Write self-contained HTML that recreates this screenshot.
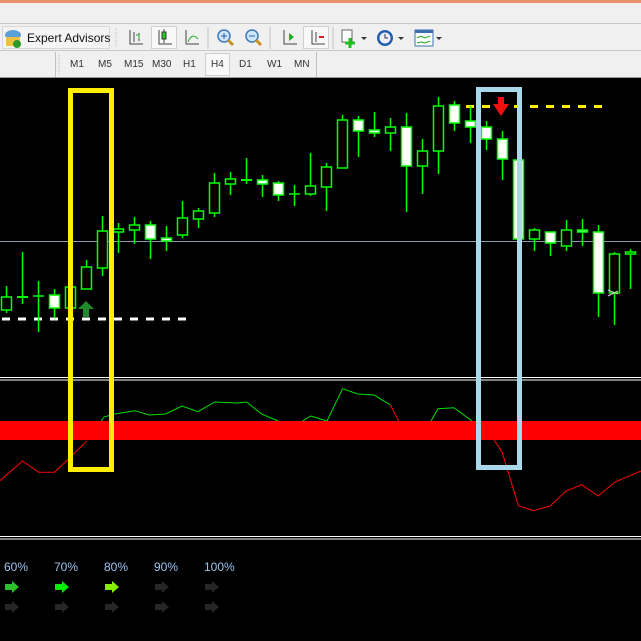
<!DOCTYPE html>
<html><head><meta charset="utf-8"><style>
*{margin:0;padding:0;box-sizing:border-box}
body{width:641px;height:641px;overflow:hidden;background:#000;font-family:"Liberation Sans",sans-serif;position:relative}
#tb{position:absolute;left:0;top:0;width:641px;height:78px;background:#f0f0f0}
.t{position:absolute;font-size:10px;color:#333;top:59px}
.p{position:absolute;font-size:12px;color:#9cc3ee;top:560px}
</style></head><body>
<div id="tb">
<div style="position:absolute;left:0;top:0;width:641px;height:3px;background:#e8916d"></div>
<div style="position:absolute;left:0;top:23px;width:641px;height:1px;background:#c8c8c8"></div>
<div style="position:absolute;left:0;top:50px;width:641px;height:1px;background:#c8c8c8"></div>
<div style="position:absolute;left:0;top:77px;width:641px;height:1px;background:#999"></div>
<div style="position:absolute;left:2px;top:26px;width:108px;height:23px;border:1px solid #d8d8d8;background:#f4f4f4"></div>
<div style="position:absolute;left:27px;top:31px;font-size:12px;color:#111">Expert Advisors</div>
<div style="position:absolute;left:55px;top:52px;width:1px;height:25px;background:#c0c0c0"></div>
<div style="position:absolute;left:316px;top:52px;width:1px;height:25px;background:#c0c0c0"></div>
<div style="position:absolute;left:205px;top:53px;width:25px;height:23px;border:1px solid #d0d0d0;background:#f8f8f8"></div>
<div style="position:absolute;left:151px;top:26px;width:26px;height:23px;border:1px solid #d0d0d0;background:#f8f8f8"></div>
<div style="position:absolute;left:303px;top:26px;width:26px;height:23px;border:1px solid #d0d0d0;background:#f8f8f8"></div>
<span class="t" style="left:70px">M1</span><span class="t" style="left:98px">M5</span><span class="t" style="left:124px">M15</span><span class="t" style="left:152px">M30</span><span class="t" style="left:183px">H1</span><span class="t" style="left:211px">H4</span><span class="t" style="left:239px">D1</span><span class="t" style="left:267px">W1</span><span class="t" style="left:294px">MN</span>
<svg width="641" height="78" style="position:absolute;left:0;top:0">
<g fill="none">
<ellipse cx="13" cy="35" rx="8" ry="5" fill="#5aa0d8"/><rect x="6" y="37" width="14" height="9" fill="#f0c040"/><circle cx="17" cy="44" r="4" fill="#2a9a2a"/>
<line x1="116" y1="28" x2="116" y2="48" stroke="#bbb" stroke-dasharray="1 1"/>
<line x1="208" y1="27" x2="208" y2="49" stroke="#c0c0c0"/><line x1="270" y1="27" x2="270" y2="49" stroke="#c0c0c0"/><line x1="333" y1="27" x2="333" y2="49" stroke="#c0c0c0"/>
<path d="M130 30v14h13M134 32v10M139 33v8" stroke="#444"/><path d="M136 35h3v4" stroke="#2a2"/>
<path d="M159 30v14h13M164 29v14" stroke="#444"/><rect x="162" y="32" width="4" height="7" fill="#2c2" stroke="#333"/>
<path d="M186 30v14h13" stroke="#444"/><path d="M188 42q4-10 10-3" stroke="#2a2"/>
<circle cx="224" cy="36" r="6" fill="#cfe6fb" stroke="#3a78c0" stroke-width="1.5"/><path d="M221 36h6M224 33v6" stroke="#2060b0"/><path d="M228 40l5 5" stroke="#c89020" stroke-width="3"/>
<circle cx="252" cy="36" r="6" fill="#cfe6fb" stroke="#3a78c0" stroke-width="1.5"/><path d="M249 36h6" stroke="#2060b0"/><path d="M256 40l5 5" stroke="#c89020" stroke-width="3"/>
<path d="M284 30v14h13" stroke="#444"/><path d="M289 33l5 4-5 4z" fill="#2a2"/>
<path d="M312 30v14h13M316 32v10" stroke="#444"/><path d="M319 37h5" stroke="#c22" stroke-width="2"/>
<rect x="342" y="30" width="10" height="12" fill="#fff" stroke="#666"/><path d="M350 38v10M345 43h10" stroke="#2b2" stroke-width="3"/><path d="M361 37l3 3 3-3z" fill="#333"/>
<circle cx="385" cy="38" r="8" fill="#1f5fb0"/><circle cx="385" cy="38" r="5.5" fill="#eef"/><path d="M385 34v4h3" stroke="#333"/><path d="M398 37l3 3 3-3z" fill="#333"/>
<rect x="415" y="30" width="18" height="16" fill="#fff" stroke="#3a70b0"/><rect x="415" y="30" width="18" height="3" fill="#3a70b0"/><path d="M417 38l4-2 4 2 5-2M417 43l4-1 4 1 5-2" stroke="#2a2"/><path d="M436 37l3 3 3-3z" fill="#333"/>
<line x1="59" y1="55" x2="59" y2="74" stroke="#bbb" stroke-dasharray="1 1"/>
</g></svg>
</div>
<svg width="641" height="641" style="position:absolute;left:0;top:0">
<rect x="0" y="78" width="641" height="1" fill="#000"/>
<line x1="0" y1="241.5" x2="641" y2="241.5" stroke="#8a9aa8"/>
<line x1="2" y1="319" x2="190" y2="319" stroke="#fff" stroke-width="3" stroke-dasharray="8 8"/>
<line x1="450" y1="106.5" x2="605" y2="106.5" stroke="#ffea00" stroke-width="3" stroke-dasharray="8 8"/>
<rect x="450" y="105" width="8" height="3" fill="#e02020"/>
<g stroke="#00ff00" stroke-width="1.5">
<line x1="6.5" y1="286" x2="6.5" y2="313"/><rect x="1.5" y="297" width="10" height="13" fill="#000"/>
<line x1="22.5" y1="252" x2="22.5" y2="304"/><line x1="17" y1="297" x2="28" y2="297" stroke-width="2"/>
<line x1="38.5" y1="281" x2="38.5" y2="332"/><line x1="33" y1="296" x2="44" y2="296"/>
<line x1="54.5" y1="289" x2="54.5" y2="318"/><rect x="49.5" y="295" width="10" height="13" fill="#fff"/>
<line x1="70.5" y1="285" x2="70.5" y2="310"/><rect x="65.5" y="287" width="10" height="21" fill="#000"/>
<line x1="86.5" y1="260" x2="86.5" y2="289"/><rect x="81.5" y="267" width="10" height="22" fill="#000"/>
<line x1="102.5" y1="216" x2="102.5" y2="276"/><rect x="97.5" y="231" width="10" height="37" fill="#000"/>
<line x1="118.5" y1="223" x2="118.5" y2="253"/><rect x="113.5" y="229" width="10" height="3" fill="#000"/>
<line x1="134.5" y1="217" x2="134.5" y2="244"/><rect x="129.5" y="225" width="10" height="5" fill="#000"/>
<line x1="150.5" y1="221" x2="150.5" y2="259"/><rect x="145.5" y="225" width="10" height="14" fill="#fff"/>
<line x1="166.5" y1="226" x2="166.5" y2="251"/><rect x="161.5" y="238" width="10" height="3" fill="#fff"/>
<line x1="182.5" y1="201" x2="182.5" y2="238"/><rect x="177.5" y="218" width="10" height="17" fill="#000"/>
<line x1="198.5" y1="208" x2="198.5" y2="228"/><rect x="193.5" y="211" width="10" height="8" fill="#000"/>
<line x1="214.5" y1="173" x2="214.5" y2="217"/><rect x="209.5" y="183" width="10" height="30" fill="#000"/>
<line x1="230.5" y1="172" x2="230.5" y2="195"/><rect x="225.5" y="179" width="10" height="5" fill="#000"/>
<line x1="246.5" y1="158" x2="246.5" y2="184"/><line x1="241" y1="180" x2="252" y2="180" stroke-width="2"/>
<line x1="262.5" y1="175" x2="262.5" y2="197"/><rect x="257.5" y="180" width="10" height="4" fill="#fff"/>
<line x1="278.5" y1="181" x2="278.5" y2="201"/><rect x="273.5" y="183" width="10" height="12" fill="#fff"/>
<line x1="294.5" y1="185" x2="294.5" y2="206"/><line x1="289" y1="194" x2="300" y2="194"/>
<line x1="310.5" y1="153" x2="310.5" y2="196"/><rect x="305.5" y="186" width="10" height="8" fill="#000"/>
<line x1="326.5" y1="163" x2="326.5" y2="211"/><rect x="321.5" y="167" width="10" height="20" fill="#000"/>
<line x1="342.5" y1="115" x2="342.5" y2="168"/><rect x="337.5" y="120" width="10" height="48" fill="#000"/>
<line x1="358.5" y1="116" x2="358.5" y2="157"/><rect x="353.5" y="120" width="10" height="11" fill="#fff"/>
<line x1="374.5" y1="112" x2="374.5" y2="137"/><rect x="369.5" y="130" width="10" height="3" fill="#fff"/>
<line x1="390.5" y1="118" x2="390.5" y2="151"/><rect x="385.5" y="127" width="10" height="6" fill="#000"/>
<line x1="406.5" y1="113" x2="406.5" y2="212"/><rect x="401.5" y="127" width="10" height="39" fill="#fff"/>
<line x1="422.5" y1="139" x2="422.5" y2="194"/><rect x="417.5" y="151" width="10" height="15" fill="#000"/>
<line x1="438.5" y1="97" x2="438.5" y2="174"/><rect x="433.5" y="106" width="10" height="45" fill="#000"/>
<line x1="454.5" y1="101" x2="454.5" y2="131"/><rect x="449.5" y="105" width="10" height="18" fill="#fff"/>
<line x1="470.5" y1="106" x2="470.5" y2="143"/><rect x="465.5" y="121" width="10" height="6" fill="#fff"/>
<line x1="486.5" y1="121" x2="486.5" y2="150"/><rect x="481.5" y="127" width="10" height="12" fill="#fff"/>
<line x1="502.5" y1="131" x2="502.5" y2="180"/><rect x="497.5" y="139" width="10" height="20" fill="#fff"/>
<rect x="513.5" y="160" width="10" height="79" fill="#fff"/>
<line x1="534.5" y1="228" x2="534.5" y2="251"/><rect x="529.5" y="230" width="10" height="9" fill="#000"/>
<line x1="550.5" y1="232" x2="550.5" y2="256"/><rect x="545.5" y="232" width="10" height="11" fill="#fff"/>
<line x1="566.5" y1="220" x2="566.5" y2="251"/><rect x="561.5" y="230" width="10" height="16" fill="#000"/>
<line x1="582.5" y1="219" x2="582.5" y2="246"/><rect x="577.5" y="230" width="10" height="2" fill="#fff"/>
<line x1="598.5" y1="225" x2="598.5" y2="317"/><rect x="593.5" y="232" width="10" height="61" fill="#fff"/>
<line x1="614.5" y1="252" x2="614.5" y2="325"/><rect x="609.5" y="254" width="10" height="39" fill="#000"/>
<line x1="630.5" y1="249" x2="630.5" y2="289"/><rect x="625.5" y="252" width="10" height="2" fill="#000"/>
</g>
<path d="M608 290l10 4M608 296l10-5" stroke="#ccc"/>
<path d="M83 317v-8h-5l8-8 8 8h-5v8z" fill="#1f8a2a"/>
<path d="M498 97h6v7h5l-8 12-8-12h5z" fill="#f01010"/>
<line x1="0" y1="377.5" x2="641" y2="377.5" stroke="#fff"/><line x1="0" y1="380" x2="641" y2="380" stroke="#fff"/>
<line x1="0" y1="536.5" x2="641" y2="536.5" stroke="#fff"/><line x1="0" y1="539" x2="641" y2="539" stroke="#fff"/>
<polyline fill="none" stroke="#00e000" points="101,421 104,417 114.5,414 135,410.7 149,415 165.6,414 182,406 198,411.7 214.6,402 237,403 246.5,402 261.6,414 278,421"/>
<polyline fill="none" stroke="#00e000" points="302.5,421 310.7,416 327,421 342.6,388.7 357.7,394 374,395 390.4,405"/>
<polyline fill="none" stroke="#00e000" points="431,421 438,408.7 453.8,407.7 472,421"/>
<polyline fill="none" stroke="#f00" points="0,480.7 22.5,461 38.8,472.3 54.4,472.3 67.5,460 87,440.7"/>
<polyline fill="none" stroke="#f00" points="390.4,405 398.6,421"/>
<polyline fill="none" stroke="#f00" points="494,440 502,452 518.4,505.7 533.5,510.7 550,506 566,491 581.8,484.7 598,496 615,482 641,471"/>
<rect x="0" y="421" width="641" height="19" fill="#ff0000"/>
<rect x="70.5" y="90.5" width="41" height="379" fill="none" stroke="#ffee00" stroke-width="5"/>
<rect x="478.5" y="89.5" width="41" height="378" fill="none" stroke="#a8d8ea" stroke-width="5"/>
<g>
<path d="M5 584h7v-3l7 6-7 6v-3h-7z" fill="#2cc02c"/><path d="M55 584h7v-3l7 6-7 6v-3h-7z" fill="#00ee00"/><path d="M105 584h7v-3l7 6-7 6v-3h-7z" fill="#88ee00"/>
<path d="M155 584h7v-3l7 6-7 6v-3h-7z" fill="#262626"/><path d="M205 584h7v-3l7 6-7 6v-3h-7z" fill="#262626"/>
<path d="M5 604h7v-3l7 6-7 6v-3h-7z" fill="#262626"/><path d="M55 604h7v-3l7 6-7 6v-3h-7z" fill="#262626"/><path d="M105 604h7v-3l7 6-7 6v-3h-7z" fill="#262626"/><path d="M155 604h7v-3l7 6-7 6v-3h-7z" fill="#262626"/><path d="M205 604h7v-3l7 6-7 6v-3h-7z" fill="#262626"/>
</g>
</svg>
<span class="p" style="left:4px">60%</span><span class="p" style="left:54px">70%</span><span class="p" style="left:104px">80%</span><span class="p" style="left:154px">90%</span><span class="p" style="left:204px">100%</span>
</body></html>
